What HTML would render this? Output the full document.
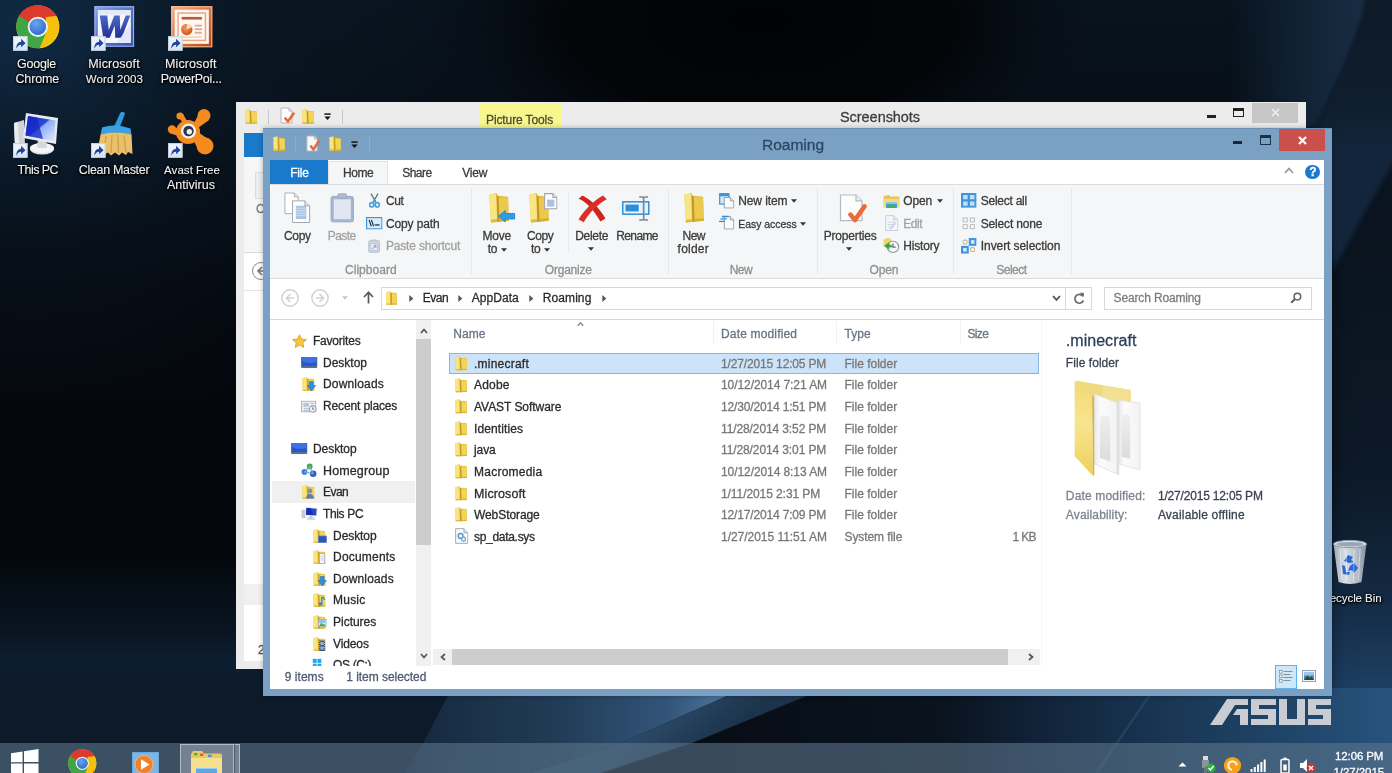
<!DOCTYPE html>
<html>
<head>
<meta charset="utf-8">
<title>Roaming</title>
<style>
*{box-sizing:border-box;margin:0;padding:0}
html,body{width:1392px;height:773px;overflow:hidden;background:#070c14}
body{filter:blur(0.55px);font-family:"Liberation Sans",sans-serif;font-size:12px;color:#1e1e1e;position:relative}
.abs{position:absolute}
svg{display:block;overflow:visible}
#wall{position:absolute;left:0;top:0;width:1392px;height:773px;overflow:hidden}
.t{position:absolute;white-space:nowrap;line-height:15px;font-size:12px;-webkit-text-stroke:0.28px currentColor}
.dl{color:#f2f2f2;-webkit-text-stroke:0.1px currentColor;margin-top:-0.2px;text-shadow:0 1px 2px #000,0 0 3px #000,1px 1px 2px rgba(0,0,0,.9)}
#asus{position:absolute;left:1210px;top:698.5px}
#task{position:absolute;left:0;top:743px;width:1392px;height:30px;background:rgba(92,116,139,.6);overflow:hidden}
#back{position:absolute;left:236px;top:101.6px;width:1069.6px;height:567.4px;background:#ececec;overflow:hidden}
#win{position:absolute;left:263px;top:128px;width:1069px;height:568px;background:#7aa0c3;overflow:hidden;box-shadow:0 0 5px rgba(0,0,0,.28)}
#inner{position:absolute;left:7px;top:32px;width:1054px;height:529px;background:#fff;overflow:hidden}

</style>
</head>
<body>
<div id="wall">
<svg class="abs" style="left:0;top:0" width="1392" height="773" viewBox="0 0 1392 773">
<defs>
<linearGradient id="wv" x1="0" y1="0" x2="0" y2="1">
 <stop offset="0" stop-color="#08131e"/><stop offset="0.16" stop-color="#070f18"/><stop offset="0.36" stop-color="#04070c"/>
 <stop offset="0.72" stop-color="#04080d"/><stop offset="0.84" stop-color="#0b1827"/><stop offset="0.9" stop-color="#0d1c2e"/><stop offset="1" stop-color="#0c1a2a"/>
</linearGradient>
<radialGradient id="wtl" cx="30" cy="20" r="420" gradientUnits="userSpaceOnUse">
 <stop offset="0" stop-color="#102b47"/><stop offset="0.25" stop-color="#0d2236" stop-opacity="0.8"/><stop offset="0.55" stop-color="#0a1826" stop-opacity="0.5"/><stop offset="1" stop-color="#0a1826" stop-opacity="0"/>
</radialGradient>
<radialGradient id="wtc" cx="760" cy="20" r="330" gradientUnits="userSpaceOnUse" gradientTransform="translate(760 20) scale(1 0.5) translate(-760 -20)">
 <stop offset="0" stop-color="#010203"/><stop offset="0.6" stop-color="#020406" stop-opacity="0.85"/><stop offset="1" stop-color="#05090f" stop-opacity="0"/>
</radialGradient>
<linearGradient id="wr" x1="0" y1="0" x2="0" y2="1">
 <stop offset="0" stop-color="#0c1825"/><stop offset="0.3" stop-color="#0a131e"/><stop offset="0.6" stop-color="#0c1927"/><stop offset="0.72" stop-color="#12263d"/><stop offset="0.88" stop-color="#1f456b"/><stop offset="1" stop-color="#245079"/>
</linearGradient>
<linearGradient id="wrh" x1="0" y1="0" x2="1" y2="0"><stop offset="0" stop-color="#000" stop-opacity="0.35"/><stop offset="0.3" stop-color="#000" stop-opacity="0"/></linearGradient>
<linearGradient id="wbB" x1="405" y1="0" x2="727" y2="0" gradientUnits="userSpaceOnUse">
 <stop offset="0" stop-color="#11223a"/><stop offset="0.12" stop-color="#182d44"/><stop offset="0.5" stop-color="#223d58"/><stop offset="0.82" stop-color="#33557a"/><stop offset="1" stop-color="#4d779d"/>
</linearGradient>
<linearGradient id="wbC" x1="621" y1="743" x2="660" y2="790" gradientUnits="userSpaceOnUse"><stop offset="0" stop-color="#2c4b69"/><stop offset="1" stop-color="#1c334b"/></linearGradient>
<linearGradient id="wbD" x1="690" y1="0" x2="1392" y2="0" gradientUnits="userSpaceOnUse">
 <stop offset="0" stop-color="#070d15"/><stop offset="0.36" stop-color="#0a131e"/><stop offset="0.5" stop-color="#11233a"/><stop offset="0.7" stop-color="#1a3856"/><stop offset="0.9" stop-color="#22496f"/><stop offset="1" stop-color="#27537d"/>
</linearGradient>
<linearGradient id="wbl" x1="0" y1="0" x2="0" y2="1"><stop offset="0" stop-color="#0e2238" stop-opacity="0"/><stop offset="0.5" stop-color="#112a45" stop-opacity="0.7"/><stop offset="1" stop-color="#0e2238" stop-opacity="0"/></linearGradient>
<filter id="bl" color-interpolation-filters="sRGB" filterUnits="userSpaceOnUse" x="-200" y="-200" width="1800" height="1200"><feGaussianBlur stdDeviation="14"/></filter>
<filter id="bl3" color-interpolation-filters="sRGB" filterUnits="userSpaceOnUse" x="-200" y="-200" width="1800" height="1200"><feGaussianBlur stdDeviation="2"/></filter>
<linearGradient id="wA" x1="1230" y1="0" x2="1350" y2="0" gradientUnits="userSpaceOnUse"><stop offset="0" stop-color="#16293d" stop-opacity="0"/><stop offset="0.6" stop-color="#14273b" stop-opacity="0.8"/><stop offset="1" stop-color="#172b40"/></linearGradient>
<linearGradient id="wC" x1="0" y1="0" x2="0" y2="200" gradientUnits="userSpaceOnUse"><stop offset="0" stop-color="#0d1a28"/><stop offset="0.5" stop-color="#0f1e2e"/><stop offset="0.75" stop-color="#13253a"/><stop offset="1" stop-color="#13253a"/></linearGradient>
<filter id="bl2" color-interpolation-filters="sRGB" filterUnits="userSpaceOnUse" x="-200" y="-200" width="1800" height="1200"><feGaussianBlur stdDeviation="6"/></filter>
</defs>
<rect width="1392" height="773" fill="url(#wv)"/>
<rect width="700" height="400" fill="url(#wtl)"/>
<rect x="400" width="720" height="200" fill="url(#wtc)"/>
<rect x="1322" y="-40" width="120" height="860" fill="url(#wr)" filter="url(#bl)"/>
<polygon points="1200,-20 1372,-20 1362,20 1345,65 1316,128 1200,128" fill="url(#wA)" filter="url(#bl3)"/>
<polygon points="1372,-20 1400,-20 1400,150 1333,270 1316,128 1345,65 1362,20" fill="url(#wC)" filter="url(#bl3)"/>
<rect x="0" y="636" width="300" height="48" fill="url(#wbl)" opacity="0.4"/>

<rect x="0" y="688" width="1392" height="85" fill="#0c1a2a"/>
<polygon points="640,688 1392,688 1392,773 560,773" fill="url(#wbD)"/>
<polygon points="452,688 745,688 621,743 531,773 405,773 423,743" fill="url(#wbB)"/>
<polygon points="745,688 826,688 692,743 601,773 531,773 621,743" fill="url(#wbC)"/>
<polygon points="1153,688 1156,688 1098,773 1095,773" fill="#3a6088" opacity="0.35"/>
</svg>
<svg width="0" height="0" style="position:absolute"><defs><radialGradient id="chg" cx="0.4" cy="0.3" r="0.8"><stop offset="0" stop-color="#6aa5ee"/><stop offset="1" stop-color="#2d66c4"/></radialGradient></defs></svg>
<svg class="abs" style="left:15.7px;top:4.7px" width="43.6" height="43.6" viewBox="-22 -22 44 44">
<circle r="21.7" fill="#f4c20d"/>
<path d="M0,0 L-18.8,-10.85 A21.7,21.7 0 0 1 18.8,-10.85 Z" fill="#db3a2c"/>
<path d="M-18.8,-10.85 A21.7,21.7 0 0 0 2,21.6 L10,4 L0,0 Z" fill="#3fa648"/>
<path d="M-18.8,-10.85 L-8.7,5 L0,0Z" fill="#3fa648"/>
<path d="M0,-10 L18.8,-10.85 A21.7,21.7 0 0 0 -18.8,-10.85 L-9,-5Z" fill="#db3a2c"/>
<path d="M18.8,-10.85 A21.7,21.7 0 0 1 2,21.6 L9,4 L8,-10Z" fill="#f4c20d"/>
<circle r="10.2" fill="#f1f1f1"/><circle r="8.2" fill="#3f7fd6"/><circle r="8.2" fill="url(#chg)"/>
</svg>
<svg class="abs" style="left:13px;top:35.5px" width="14.500" height="14.800" viewBox="0 0 15 15"><rect width="15" height="15" fill="#eef2f8"/><rect x="0.500" y="0.500" width="14" height="14" fill="none" stroke="#c3cfe0"/><path d="M0.500,10 L14.500,10 L14.500,14.500 L0.500,14.500Z" fill="#d4e0f2" opacity="0.8"/>
<path d="M3.600,13 C3.200,8 5.600,5.800 8.400,5.700 L8.400,2.800 L13,7.300 L8.400,11.600 L8.400,8.800 C6.200,8.800 4.600,10 3.600,13Z" fill="#1c469c"/></svg>
<span class="t dl" style="left:36.5px;width:0;display:flex;justify-content:center;top:55.8px;font-size:12.5px;line-height:16px;letter-spacing:-0.22px"><span style="white-space:nowrap">Google</span></span>
<span class="t dl" style="left:37.3px;width:0;display:flex;justify-content:center;top:70.8px;font-size:12.5px;line-height:16px;letter-spacing:-0.13px"><span style="white-space:nowrap">Chrome</span></span>
<svg class="abs" style="left:94px;top:6px" width="40.500" height="41" viewBox="0 0 40 41">
<defs><linearGradient id="wdf" x1="0" y1="0" x2="1" y2="1"><stop offset="0" stop-color="#86a2e6"/><stop offset="0.5" stop-color="#5673c9"/><stop offset="1" stop-color="#3550b0"/></linearGradient>
<linearGradient id="wdw" x1="0" y1="0" x2="0" y2="1"><stop offset="0" stop-color="#4f69c8"/><stop offset="1" stop-color="#1f2f96"/></linearGradient></defs>
<rect width="40" height="41" fill="url(#wdf)"/><rect x="0.800" y="0.800" width="38.400" height="39.400" fill="none" stroke="#9db3ec" stroke-width="1"/>
<rect x="3.600" y="4" width="33" height="33" fill="#f4f6fc"/><rect x="3.600" y="4" width="33" height="4.500" fill="#e3e9f8"/>
<path d="M5.500,9.500 L13,9.500 L14.500,24 L20,9.500 L25.500,9.500 L26,24 L31.500,9.500 L36,9.500 L27.500,31.800 L21,31.800 L20.500,19.500 L15.500,31.800 L9,31.800Z" fill="url(#wdw)"/>
<path d="M22,37 L36.600,18 L36.600,37Z" fill="#dfe5f6" opacity="0.8"/></svg>
<svg class="abs" style="left:90.5px;top:35.5px" width="14.500" height="14.800" viewBox="0 0 15 15"><rect width="15" height="15" fill="#eef2f8"/><rect x="0.500" y="0.500" width="14" height="14" fill="none" stroke="#c3cfe0"/><path d="M0.500,10 L14.500,10 L14.500,14.500 L0.500,14.500Z" fill="#d4e0f2" opacity="0.8"/>
<path d="M3.600,13 C3.200,8 5.600,5.800 8.400,5.700 L8.400,2.800 L13,7.300 L8.400,11.600 L8.400,8.800 C6.200,8.800 4.600,10 3.600,13Z" fill="#1c469c"/></svg>
<span class="t dl" style="left:114.0px;width:0;display:flex;justify-content:center;top:55.8px;font-size:12.5px;line-height:16px;letter-spacing:0.08px"><span style="white-space:nowrap">Microsoft</span></span>
<span class="t dl" style="left:114.4px;width:0;display:flex;justify-content:center;top:70.8px;font-size:11.5px;line-height:16px;letter-spacing:0.13px"><span style="white-space:nowrap">Word 2003</span></span>
<svg class="abs" style="left:171px;top:6px" width="41.500" height="41.500" viewBox="0 0 41 41">
<defs><linearGradient id="ppf" x1="0" y1="0" x2="1" y2="1"><stop offset="0" stop-color="#f0b48a"/><stop offset="0.45" stop-color="#db7c4c"/><stop offset="1" stop-color="#b04a1c"/></linearGradient>
<radialGradient id="ppc" cx="0.4" cy="0.35" r="0.7"><stop offset="0" stop-color="#f59a5c"/><stop offset="1" stop-color="#cf4f16"/></radialGradient></defs>
<rect width="41" height="41" fill="url(#ppf)"/><rect x="0.800" y="0.800" width="39.400" height="39.400" fill="none" stroke="#f5c4a4" stroke-width="1" opacity="0.8"/>
<rect x="3.600" y="3.600" width="33.800" height="33.800" fill="#fdf3ec"/><rect x="7" y="7" width="27" height="27" fill="#fff8f3" stroke="#eaa57f" stroke-width="1.400"/>
<rect x="10.500" y="10.800" width="20" height="2.600" fill="#bd5a36"/>
<circle cx="15.600" cy="23.200" r="5.600" fill="url(#ppc)"/><path d="M15.600,23.200 L15.600,17.600 A5.600,5.600 0 0 1 20.800,21Z" fill="#fbd9c3"/>
<g fill="#e7a888"><rect x="23.500" y="18.500" width="7" height="1.800"/><rect x="23.500" y="22" width="7" height="1.800"/><rect x="23.500" y="25.500" width="7" height="1.800"/></g>
<rect x="10.500" y="30" width="20" height="1.400" fill="#f2cdb6"/></svg>
<svg class="abs" style="left:168px;top:35.5px" width="14.500" height="14.800" viewBox="0 0 15 15"><rect width="15" height="15" fill="#eef2f8"/><rect x="0.500" y="0.500" width="14" height="14" fill="none" stroke="#c3cfe0"/><path d="M0.500,10 L14.500,10 L14.500,14.500 L0.500,14.500Z" fill="#d4e0f2" opacity="0.8"/>
<path d="M3.600,13 C3.200,8 5.600,5.800 8.400,5.700 L8.400,2.800 L13,7.300 L8.400,11.600 L8.400,8.800 C6.200,8.800 4.600,10 3.600,13Z" fill="#1c469c"/></svg>
<span class="t dl" style="left:190.8px;width:0;display:flex;justify-content:center;top:55.8px;font-size:12.5px;line-height:16px;letter-spacing:0.08px"><span style="white-space:nowrap">Microsoft</span></span>
<span class="t dl" style="left:191.2px;width:0;display:flex;justify-content:center;top:70.8px;font-size:12.5px;line-height:16px;letter-spacing:-0.27px"><span style="white-space:nowrap">PowerPoi...</span></span>
<svg class="abs" style="left:12px;top:111px" width="48" height="46" viewBox="0 0 48 46">
<defs><linearGradient id="pcs" x1="0" y1="0" x2="1" y2="1"><stop offset="0" stop-color="#1a2fd0"/><stop offset="0.45" stop-color="#2a49d8"/><stop offset="0.5" stop-color="#8fb0f4"/><stop offset="1" stop-color="#dfeaff"/></linearGradient></defs>
<path d="M2,12 L12,9 L13,34 L3,36Z" fill="#cfd3d8"/><path d="M2,12 L6,11 L7,35 L3,36Z" fill="#e9ebee"/>
<ellipse cx="30" cy="38" rx="12" ry="5.5" fill="#dfe2e6"/><ellipse cx="30" cy="37" rx="12" ry="5" fill="#f4f5f7"/><path d="M26,28 L34,29 L35,37 L25,37Z" fill="#d5d8dc"/>
<path d="M14,2 L46,7 L44,33 L11,27Z" fill="#e7eaee"/><path d="M16,5 L43.5,9.5 L42,30 L13.5,24.5Z" fill="url(#pcs)"/>
<path d="M16,5 L25,6.5 L31,28 L13.5,24.5Z" fill="#1626c4" opacity="0.75"/>
</svg>
<svg class="abs" style="left:13px;top:142.5px" width="14.500" height="14.800" viewBox="0 0 15 15"><rect width="15" height="15" fill="#eef2f8"/><rect x="0.500" y="0.500" width="14" height="14" fill="none" stroke="#c3cfe0"/><path d="M0.500,10 L14.500,10 L14.500,14.500 L0.500,14.500Z" fill="#d4e0f2" opacity="0.8"/>
<path d="M3.600,13 C3.200,8 5.600,5.800 8.400,5.700 L8.400,2.800 L13,7.300 L8.400,11.600 L8.400,8.800 C6.200,8.800 4.600,10 3.600,13Z" fill="#1c469c"/></svg>
<span class="t dl" style="left:37.7px;width:0;display:flex;justify-content:center;top:161.8px;font-size:12.5px;line-height:16px;letter-spacing:-0.60px"><span style="white-space:nowrap">This PC</span></span>
<svg class="abs" style="left:93px;top:110px" width="42" height="46" viewBox="0 0 42 46">
<path d="M27.5,2.5 Q30.5,0.5 32,3.5 L26.5,18 L21,16.5Z" fill="#2f9ce0"/>
<path d="M9,17.5 Q22,13 37.5,18.5 L38.5,25 Q22,20.5 7.5,25Z" fill="#3aa2e2"/>
<path d="M7.5,24.5 Q22,20.5 38.5,24.5 L39.5,44 L35,42 L33,45 L29,42.5 L26,45.5 L22,42.5 L18,45.5 L15,42.5 L10,45 L8,42 L2,45 Q6,36 7.5,24.5Z" fill="#eac06a"/>
<path d="M13,26 L11,42 M19,25 L18,43 M25,25 L25.5,43 M31,25.5 L33,42.5" stroke="#cfa04a" stroke-width="1.3" fill="none"/>
</svg>
<svg class="abs" style="left:90.5px;top:142.5px" width="14.500" height="14.800" viewBox="0 0 15 15"><rect width="15" height="15" fill="#eef2f8"/><rect x="0.500" y="0.500" width="14" height="14" fill="none" stroke="#c3cfe0"/><path d="M0.500,10 L14.500,10 L14.500,14.500 L0.500,14.500Z" fill="#d4e0f2" opacity="0.8"/>
<path d="M3.600,13 C3.200,8 5.600,5.800 8.400,5.700 L8.400,2.800 L13,7.300 L8.400,11.600 L8.400,8.800 C6.200,8.800 4.600,10 3.600,13Z" fill="#1c469c"/></svg>
<span class="t dl" style="left:114.0px;width:0;display:flex;justify-content:center;top:161.8px;font-size:12.5px;line-height:16px;letter-spacing:-0.32px"><span style="white-space:nowrap">Clean Master</span></span>
<svg class="abs" style="left:166px;top:107.5px" width="49" height="50" viewBox="0 0 49 50">
<g fill="#f58a1f"><circle cx="22" cy="24" r="12"/><circle cx="38" cy="7.5" r="6.5"/><circle cx="14" cy="8" r="3.6"/><circle cx="6" cy="21.5" r="4.2"/><circle cx="39" cy="38" r="8.5"/>
<path d="M28,15 L34,4 L43,12 L32,20Z"/><path d="M16,14 L12,7 L17,6 L21,13Z"/><path d="M11,20 L4,18 L5,25.5 L12,28Z"/><path d="M27,32 L34,44 L45,33 L32,24Z"/></g>
<circle cx="22.5" cy="23" r="7.6" fill="#f3f3f3"/><circle cx="22.5" cy="23" r="5.2" fill="#2c3644"/><circle cx="23.3" cy="23.8" r="2.7" fill="#f3f3f3"/><rect x="23" y="23" width="6" height="6" fill="#f3f3f3" opacity="0.0"/>
</svg>
<svg class="abs" style="left:168px;top:142.5px" width="14.500" height="14.800" viewBox="0 0 15 15"><rect width="15" height="15" fill="#eef2f8"/><rect x="0.500" y="0.500" width="14" height="14" fill="none" stroke="#c3cfe0"/><path d="M0.500,10 L14.500,10 L14.500,14.500 L0.500,14.500Z" fill="#d4e0f2" opacity="0.8"/>
<path d="M3.600,13 C3.200,8 5.600,5.800 8.400,5.700 L8.400,2.800 L13,7.300 L8.400,11.600 L8.400,8.800 C6.200,8.800 4.600,10 3.600,13Z" fill="#1c469c"/></svg>
<span class="t dl" style="left:192.0px;width:0;display:flex;justify-content:center;top:161.8px;font-size:11.5px;line-height:16px;letter-spacing:0.04px"><span style="white-space:nowrap">Avast Free</span></span>
<span class="t dl" style="left:191.0px;width:0;display:flex;justify-content:center;top:177.3px;font-size:12.5px;line-height:16px"><span style="white-space:nowrap">Antivirus</span></span>
<svg class="abs" style="left:1332px;top:539px" width="36" height="46" viewBox="0 0 36 46">
<defs><linearGradient id="rb" x1="0" y1="0" x2="1" y2="0"><stop offset="0" stop-color="#aeb9c6"/><stop offset="0.35" stop-color="#e8edf2"/><stop offset="0.7" stop-color="#c3ccd6"/><stop offset="1" stop-color="#8e9aa8"/></linearGradient></defs>
<path d="M1.5,5 L34.5,5 L29.5,43 Q18,47 6.5,43Z" fill="url(#rb)" opacity="0.92"/>
<ellipse cx="18" cy="5" rx="16.5" ry="3.6" fill="#dfe5ec" stroke="#8f9baa" stroke-width="1"/>
<ellipse cx="18" cy="5.2" rx="13.5" ry="2.3" fill="#9aa6b5"/>
<path d="M12,22 l4,-6 l5,2 l-2,3 l3,2 l-5,1Z M22,24 l4,5 l-4,5 l-2,-3 l-4,1 l2,-5Z M10,26 l3,1 l1,6 l4,0 l-1,3 l-6,-1Z" fill="#2a66d8"/>
<path d="M8,10 L10,41 M14,11 L15,43 M22,11 L21.5,43 M28,10 L26.5,41" stroke="#fff" stroke-opacity="0.45" stroke-width="1"/>
</svg>
<span class="t dl" style="left:1351.5px;width:0;display:flex;justify-content:center;top:590.3px;font-size:11.5px;line-height:16px;letter-spacing:-0.07px"><span style="white-space:nowrap">Recycle Bin</span></span>
</div>
<div id="asus"><svg width="121" height="27" viewBox="0 0 121 27"><g fill="#c9cdd3"><path d="M0,26 L17,0 L38,0 L38,6 L25,6 L12,26Z"/><path d="M26,11 L26,26 L34,26 L34,11Z" transform="skewX(-8) translate(3,0)" opacity="0"/><path d="M22,20 L38,20 L38,26 L18,26Z" opacity="0"/><path d="M27,10 L38,10 L38,26 L30,26 L30,16 L23,16Z"/><path d="M41,0 L66,0 L66,6 L49,6 L49,10 L66,10 L66,26 L41,26 L41,20 L58,20 L58,16 L41,16Z"/><path d="M69,0 L77,0 L77,20 L87,20 L87,0 L95,0 L95,26 L69,26Z"/><path d="M98,0 L121,0 L121,6 L106,6 L106,10 L121,10 L121,26 L98,26 L98,20 L113,20 L113,16 L98,16Z"/></g></svg></div>
<div id="task">
<div class="abs" style="left:180px;top:1px;width:54px;height:29px;background:rgba(150,160,172,.62);border:1px solid rgba(200,208,216,.75);border-bottom:none"></div>
<div class="abs" style="left:234px;top:1px;width:5.5px;height:29px;background:rgba(150,160,172,.62);border:1px solid rgba(200,208,216,.75);border-bottom:none;border-left:1px solid rgba(70,84,100,.9)"></div>
<svg class="abs" style="left:11px;top:6px" width="28" height="24" viewBox="0 0 28 24"><g fill="#fff"><path d="M0,4.2 L11.6,2.5 L11.6,13.2 L0,13.3Z"/><path d="M13,2.3 L27.5,0 L27.5,13 L13,13.1Z"/><path d="M0,14.6 L11.6,14.6 L11.6,25.5 L0,23.8Z"/><path d="M13,14.6 L27.5,14.6 L27.5,28 L13,25.8Z"/></g></svg>
<svg class="abs" style="left:68.2px;top:5.7px" width="28.6" height="28.6" viewBox="-22 -22 44 44">
<circle r="21.7" fill="#f4c20d"/>
<path d="M0,0 L-18.8,-10.85 A21.7,21.7 0 0 1 18.8,-10.85 Z" fill="#db3a2c"/>
<path d="M-18.8,-10.85 A21.7,21.7 0 0 0 2,21.6 L10,4 L0,0 Z" fill="#3fa648"/>
<path d="M-18.8,-10.85 L-8.7,5 L0,0Z" fill="#3fa648"/>
<path d="M0,-10 L18.8,-10.85 A21.7,21.7 0 0 0 -18.8,-10.85 L-9,-5Z" fill="#db3a2c"/>
<path d="M18.8,-10.85 A21.7,21.7 0 0 1 2,21.6 L9,4 L8,-10Z" fill="#f4c20d"/>
<circle r="10.2" fill="#f1f1f1"/><circle r="8.2" fill="#3f7fd6"/><circle r="8.2" fill="url(#chg)"/>
</svg>
<svg class="abs" style="left:131.5px;top:9px" width="27" height="21" viewBox="0 0 27 21"><rect width="27" height="21" fill="#6aa6d8"/><rect x="1" y="1" width="25" height="20" fill="#7db6e4"/><circle cx="12" cy="12.5" r="9" fill="#f0812a"/><circle cx="12" cy="12.5" r="9" fill="none" stroke="#f9b377" stroke-width="1"/><path d="M9,7.3 L17.5,12.5 L9,17.7Z" fill="#fff"/></svg>
<svg class="abs" style="left:190px;top:7px" width="33" height="23" viewBox="0 0 33 23"><path d="M1,4 L3,1 L12,1 L14,3.5 L31,3.5 L32,5 L32,23 L1,23Z" fill="#e8c964"/><rect x="4" y="3" width="3.4" height="2.4" fill="#4bb04a"/><rect x="10" y="3.6" width="3.4" height="2.4" fill="#e05a3a"/><rect x="18" y="4.6" width="3.6" height="2.4" fill="#4a8fe0"/><path d="M1,8 L32,8 L32,23 L1,23Z" fill="#f6df8e"/><rect x="6" y="17" width="21" height="6" fill="#5aa8e6"/><rect x="6" y="17" width="21" height="1.6" fill="#c6e2f7"/></svg>
<svg class="abs" style="left:1176px;top:12px" width="160" height="18" viewBox="0 0 160 18"><path d="M2.5,11.5 L6.5,7.5 L10.5,11.5Z" fill="#fff"/><rect x="27" y="1" width="5" height="4" fill="#d8dde2"/><rect x="26" y="5" width="7" height="8" fill="#8a949e"/><rect x="28" y="12" width="3" height="6" fill="#6d7680"/><circle cx="35" cy="13" r="4.6" fill="#2fae3a"/><path d="M32.6,13 L34.4,15 L37.6,11" stroke="#fff" stroke-width="1.4" fill="none"/><circle cx="56.5" cy="10.5" r="8.6" fill="#f7a11a"/><circle cx="56.5" cy="10.5" r="4.2" fill="none" stroke="#fdf0d8" stroke-width="2.2"/><rect x="56" y="10.5" width="6" height="6" fill="#f7a11a"/><g fill="#fff"><rect x="74.5" y="14" width="2" height="3"/><rect x="77.8" y="12" width="2" height="5"/><rect x="81.1" y="9.5" width="2" height="7.5"/><rect x="84.4" y="7" width="2" height="10"/><rect x="87.7" y="4.5" width="2" height="12.5"/></g><rect x="105" y="4.5" width="8" height="13.5" rx="1.2" fill="none" stroke="#fff" stroke-width="1.5"/><rect x="107.5" y="2.6" width="3" height="2" fill="#fff"/><rect x="107.3" y="9.5" width="3.4" height="6" fill="#fff"/><path d="M124,8 L127,8 L131,4 L131,17 L127,13 L124,13Z" fill="#fff"/><circle cx="135" cy="13" r="4.4" fill="#d9332e"/><path d="M133,11 L137,15 M137,11 L133,15" stroke="#fff" stroke-width="1.3"/></svg>
<span class="t" style="left:1335.0px;top:5.3px;font-size:11.5px;line-height:16px;letter-spacing:-0.12px;color:#fff">12:06 PM</span>
<span class="t" style="left:1333.5px;top:21.3px;font-size:11.5px;line-height:16px;letter-spacing:-0.07px;color:#fff">1/27/2015</span>
</div>
<div id="back"><div class="abs" style="left:-236px;top:-102px">
<svg class="abs" style="left:244px;top:108px;" width="14.5" height="17"><use href="#fold16" width="14.5" height="17"/></svg>
<div class="abs" style="left:267.5px;top:110px;width:1px;height:14px;background:#c6c6c6;"></div>
<svg class="abs" style="left:278.5px;top:107.5px;" width="16" height="18"><use href="#doccheck" width="16" height="18"/></svg>
<svg class="abs" style="left:301px;top:108px;" width="14.5" height="17"><use href="#fold16" width="14.5" height="17"/></svg>
<svg class="abs" style="left:322.5px;top:112.5px;" width="9" height="9"><use href="#qadrop" width="9" height="9"/></svg>
<div class="abs" style="left:341.5px;top:110px;width:1px;height:14px;background:#c6c6c6;"></div>
<div class="abs" style="left:479px;top:104px;width:82px;height:24px;background:#f8f68e;"></div>
<span class="t" style="left:486.0px;top:113.3px;letter-spacing:-0.11px;color:#4a4a30">Picture Tools</span>
<span class="t" style="left:840.0px;top:108.8px;font-size:14.5px;line-height:19px;letter-spacing:-0.05px;color:#3c3c3c">Screenshots</span>
<div class="abs" style="left:1207px;top:115.5px;width:8.5px;height:2.6px;background:#222;"></div>
<div class="abs" style="left:1233px;top:108px;width:10.5px;height:9.5px;border:1.4px solid #222;border-top-width:3px"></div>
<div class="abs" style="left:1252px;top:103px;width:46px;height:20px;background:#c6c6c6;"></div>
<svg class="abs" style="left:1270.5px;top:108.5px" width="9" height="9" viewBox="0 0 9 9"><path d="M1,1 L8,8 M8,1 L1,8" stroke="#efefef" stroke-width="1.700"/></svg>
<div class="abs" style="left:244px;top:128px;width:20px;height:541px;background:#fff;"></div>
<div class="abs" style="left:244px;top:128px;width:20px;height:6px;background:#ececec;"></div>
<div class="abs" style="left:244px;top:133.5px;width:20px;height:23.5px;background:#1979ca;"></div>
<div class="abs" style="left:244px;top:157px;width:20px;height:96px;background:#f5f6f7;"></div>
<div class="abs" style="left:244px;top:252px;width:20px;height:1px;background:#dadbdc;"></div>
<div class="abs" style="left:255px;top:172px;width:9px;height:27px;background:#eceef2;border:1px solid #d9dde3"></div>
<span class="t" style="left:256.0px;top:202.3px;color:#7a7a7a">C</span>
<div class="abs" style="left:251.5px;top:262px;width:18px;height:18px;border:1.6px solid #8c8c8c;border-radius:50%"></div>
<svg class="abs" style="left:255.5px;top:266px" width="10" height="10" viewBox="0 0 10 10"><path d="M6,1 L2,5 L6,9 M2,5 L10,5" stroke="#777" stroke-width="1.600" fill="none"/></svg>
<div class="abs" style="left:244px;top:290px;width:20px;height:1px;background:#e4e4e4;"></div>
<div class="abs" style="left:244px;top:584px;width:20px;height:21px;background:#f0f0f0;"></div>
<span class="t" style="left:258.0px;top:643.3px;color:#555">2</span>
<div class="abs" style="left:244px;top:661px;width:20px;height:8px;background:#ececec;"></div>
</div></div>
<svg width="0" height="0" style="position:absolute"><defs>
<symbol id="fold16" viewBox="0 0 16 16" preserveAspectRatio="none"><path d="M1.5,2.2 L6,1.2 L7,2.6 L14,3 L14.3,14.6 L1.8,14.8Z" fill="#e6c03c"/><path d="M1.5,2.2 L5.6,1.3 L6.4,14.9 L1.8,14.8Z" fill="#f8e57e"/><path d="M7.6,3.4 L13.8,3.6 L14,14.3 L8.2,14.6Z" fill="#f1d458"/><path d="M6.6,3 L7.9,3 L8.4,14.7 L6.8,14.8Z" fill="#c49a26"/><path d="M2,13.500 L14.200,13.300 L14.300,14.600 L1.800,14.800Z" fill="#d2a930" opacity="0.7"/></symbol>
<symbol id="fold32" viewBox="0 0 32 34" preserveAspectRatio="none"><path d="M3,3 L12,1 L14,4 L27,5 L28,30 L5,32Z" fill="#e3bb3c"/><path d="M3,3 L11.5,1.2 L13,31.3 L5,32Z" fill="#f8e684"/><path d="M15,5.4 L27,6 L27.6,29.6 L16,30.8Z" fill="#ebc94e"/><path d="M12.6,4 L15,4.6 L16,31 L13,31.4Z" fill="#c39927"/><path d="M5,29 L27.800,27.500 L28,30 L5,32Z" fill="#cfa52e" opacity="0.7"/></symbol>
<symbol id="doc" viewBox="0 0 16 16" preserveAspectRatio="none"><path d="M3,1 L10,1 L13,4 L13,15 L3,15Z" fill="#fff" stroke="#9aa3ae" stroke-width="1"/><path d="M10,1 L10,4 L13,4" fill="#e6e9ee" stroke="#9aa3ae" stroke-width="1"/></symbol>
<symbol id="doccheck" viewBox="0 0 16 18" preserveAspectRatio="none"><path d="M2,1 L10,1 L13,4 L13,16 L2,16Z" fill="#fdfdfd" stroke="#b3b7bd" stroke-width="1"/><path d="M10,1 L10,4 L13,4" fill="#e9ebee" stroke="#b3b7bd" stroke-width="1"/><path d="M6.5,11.5 L9,14.5 L14.5,6.5" fill="none" stroke="#e8683a" stroke-width="2.6" stroke-linecap="round" stroke-linejoin="round"/></symbol>
<symbol id="qadrop" viewBox="0 0 10 10" preserveAspectRatio="none"><rect x="1.5" y="1.5" width="7" height="1.6" fill="#111"/><path d="M1.5,5 L8.5,5 L5,8.8Z" fill="#111"/></symbol>
<symbol id="copy32" viewBox="0 0 30 32" preserveAspectRatio="none"><path d="M1,1 L11,1 L15,5 L15,22 L1,22Z" fill="#fff" stroke="#a9adb3"/><path d="M11,1 L11,5 L15,5" fill="#e4e6ea" stroke="#a9adb3"/>
<path d="M9,9 L22,9 L27,14 L27,31 L9,31Z" fill="#fdfdfd" stroke="#9fa4ab"/><path d="M22,9 L22,14 L27,14" fill="#e1e4e8" stroke="#9fa4ab"/>
<rect x="12.5" y="14" width="11" height="13.5" fill="#a9c3e6"/><path d="M12.5,16.5h11M12.5,19h11M12.5,21.500h11M12.5,24h11" stroke="#dbe7f6" stroke-width="0.8"/></symbol>
<symbol id="paste32" viewBox="0 0 26 31" preserveAspectRatio="none"><rect x="1.2" y="3.5" width="23.6" height="26.3" rx="2" fill="#9fb0cd" stroke="#8a9bbb"/><rect x="4" y="6.5" width="18" height="20.5" fill="#dfe5f1"/><rect x="8.5" y="0.8" width="9" height="4.6" rx="1" fill="#a9b6cc" stroke="#8a9bbb" stroke-width="0.8"/></symbol>
<symbol id="cut" viewBox="0 0 12 16" preserveAspectRatio="none"><path d="M2.2,0.6 L7.3,9.2 M9.8,0.6 L4.7,9.2" stroke="#6c7787" stroke-width="1.5" fill="none"/><circle cx="3" cy="12.2" r="2.3" fill="none" stroke="#3ea0dd" stroke-width="1.7"/><circle cx="9" cy="12.2" r="2.3" fill="none" stroke="#3ea0dd" stroke-width="1.7"/><path d="M4.4,10.2 L6,7.6 L7.6,10.2" stroke="#3ea0dd" stroke-width="1.5" fill="none"/></symbol>
<symbol id="copypath" viewBox="0 0 17 13" preserveAspectRatio="none"><rect x="0.6" y="0.6" width="15.8" height="11.8" fill="#d8ecfb" stroke="#3c93d6" stroke-width="1.2"/><path d="M3.2,3 L5.4,9.6 M5.6,3 L7.8,9.6" stroke="#1d2b3c" stroke-width="1.2"/><rect x="9" y="7.6" width="5" height="1.3" fill="#1d2b3c"/></symbol>
<symbol id="pastesc" viewBox="0 0 13 15" preserveAspectRatio="none"><rect x="0.8" y="1.8" width="11.4" height="12.4" rx="1" fill="#c9d1de" stroke="#a6b0c2"/><rect x="4" y="0.5" width="5" height="2.4" fill="#b4bdcc"/><rect x="3" y="5" width="7" height="7" fill="#eef1f6" stroke="#9fb0cb" stroke-width="0.8"/><path d="M4.6,10.6 L8.2,7 M5.6,6.8 L8.4,6.8 L8.4,9.6" stroke="#7f94b8" stroke-width="1.1" fill="none"/></symbol>
<symbol id="bluearrow" viewBox="0 0 18 13" preserveAspectRatio="none"><path d="M0.5,6.5 L7.5,0.5 L7.5,3.6 L17.3,3.6 L17.3,9.4 L7.5,9.4 L7.5,12.5Z" fill="#2d9be6" stroke="#1b7fc9" stroke-width="0.8"/></symbol>
<symbol id="minidoc" viewBox="0 0 13 16" preserveAspectRatio="none"><path d="M0.6,0.6 L8.5,0.6 L12.4,4.4 L12.4,15.4 L0.6,15.4Z" fill="#fdfdfd" stroke="#9fa4ab"/><path d="M8.5,0.6 L8.5,4.4 L12.4,4.4" fill="#e1e4e8" stroke="#9fa4ab"/><rect x="3" y="6.4" width="7" height="6.8" fill="#a9c3e6"/></symbol>
<symbol id="delx" viewBox="0 0 30 28" preserveAspectRatio="none"><path d="M1.500,3.800 C8,5.500 17,15.500 23.500,27 L28.500,24 C22,12.500 13.500,4.500 5.500,0.500Z" fill="#cf251d"/><path d="M26,0.500 C17,5.500 7,15.500 1.500,25 L6.800,27.800 C11.500,18.500 20.500,9.500 29.800,4.200Z" fill="#dc3027"/></symbol>
<symbol id="rename" viewBox="0 0 31 25" preserveAspectRatio="none"><rect x="0.8" y="5.8" width="26.4" height="12.4" fill="#e6f2fc" stroke="#2f8fd6" stroke-width="1.5"/><rect x="3.6" y="8.6" width="13.4" height="6.8" fill="#2f8fd6"/><path d="M17.5,1 L20.5,1 Q22,1 22,2.6 L22,22.4 Q22,24 20.5,24 L17.5,24 M26.500,1 L23.5,1 Q22,1 22,2.6 M26.500,24 L23.5,24 Q22,24 22,22.4" fill="none" stroke="#7c8794" stroke-width="1.7"/></symbol>
<symbol id="newitem" viewBox="0 0 16 16" preserveAspectRatio="none"><rect x="0.7" y="0.7" width="9.600" height="10.6" fill="#cfe6f8" stroke="#3c93d6" stroke-width="1.2"/><rect x="0.7" y="0.7" width="9.600" height="2.6" fill="#3c93d6"/><path d="M5.5,4.600 L11.6,4.600 L15.2,8 L15.2,15.3 L5.5,15.3Z" fill="#fbfbfc" stroke="#99a0a9"/><path d="M11.6,4.600 L11.6,8 L15.2,8" fill="#e3e6ea" stroke="#99a0a9"/></symbol>
<symbol id="easy" viewBox="0 0 16 16" preserveAspectRatio="none"><path d="M5.5,2.600 L11.6,2.600 L15.2,6 L15.2,15.3 L5.5,15.3Z" fill="#fbfbfc" stroke="#99a0a9"/><path d="M11.6,2.600 L11.6,6 L15.2,6" fill="#e3e6ea" stroke="#99a0a9"/><path d="M3,2.500h7M1.500,5h6.500M0,7.500h6" stroke="#2f8fd6" stroke-width="1.4"/></symbol>
<symbol id="props" viewBox="0 0 28 30" preserveAspectRatio="none"><path d="M1.5,1 L17,1 L23,7 L23,27 L1.5,27Z" fill="#fdfdfd" stroke="#b6babf" stroke-width="1.2"/><path d="M17,1 L17,7 L23,7" fill="#eceef0" stroke="#b6babf" stroke-width="1.2"/><path d="M11.500,21 L16,26.500 L25.500,12.500" fill="none" stroke="#ea6a3c" stroke-width="4.600" stroke-linecap="round" stroke-linejoin="round"/></symbol>
<symbol id="open" viewBox="0 0 17 15" preserveAspectRatio="none"><path d="M0.6,2 L6,1 L7.5,2.600 L16.4,2.600 L16.4,13.6 L0.6,13.6Z" fill="#e7c456"/><path d="M0.6,5 L16.4,5 L16.4,13.6 L0.6,13.6Z" fill="#f3db7e"/><path d="M3,8.6 L14,8.6 L14,14.5 L3,14.5Z" fill="#3fa0e0"/><path d="M3,8.6 L14,8.6 L14,10 L3,10Z" fill="#9ad0f3"/><path d="M5,12 q3.500,-2.500 7,0.5 L12,14.5 L5,14.5Z" fill="#4bae4f"/></symbol>
<symbol id="edit" viewBox="0 0 14 17" preserveAspectRatio="none"><path d="M0.7,0.7 L9,0.7 L13.3,5 L13.3,16.3 L0.7,16.3Z" fill="#f4f6fa" stroke="#bcc5d6"/><path d="M9,0.7 L9,5 L13.3,5" fill="#dfe5f0" stroke="#bcc5d6"/><path d="M3,7.500h8M3,10h8M3,12.500h6" stroke="#c6d0e2" stroke-width="1"/><path d="M10.500,8 L5.500,15" stroke="#b9c6de" stroke-width="1.6"/></symbol>
<symbol id="history" viewBox="0 0 17 17" preserveAspectRatio="none"><path d="M0.6,3 L5,0.6 L9,3 L9,8 L0.6,10Z" fill="#f1d46e"/><circle cx="10.200" cy="10.400" r="5.900" fill="#f4f5f7" stroke="#8d97a3" stroke-width="1.2"/><path d="M10.200,6.800 L10.200,10.600 L13,10.600" stroke="#5d6876" stroke-width="1.2" fill="none"/><path d="M1,9.500 L6.500,5.500 L6.500,8 Q9.500,8 9.500,11 Q8.500,10.500 6.500,10.800 L6.500,13.200Z" fill="#37a83c"/></symbol>
<symbol id="selall" viewBox="0 0 16 16" preserveAspectRatio="none"><rect width="16" height="16" fill="#3f96dc"/><g fill="#bfe0f8"><rect x="2.200" y="2.200" width="4.600" height="4.600"/><rect x="9.200" y="2.200" width="4.600" height="4.600"/><rect x="2.200" y="9.200" width="4.600" height="4.600"/><rect x="9.200" y="9.200" width="4.600" height="4.600"/></g></symbol>
<symbol id="selnone" viewBox="0 0 16 16" preserveAspectRatio="none"><g fill="#fafbfc" stroke="#b9bdc3" stroke-width="1.1"><rect x="2.200" y="2.200" width="4.200" height="4.200"/><rect x="9.600" y="2.200" width="4.200" height="4.200"/><rect x="2.200" y="9.600" width="4.200" height="4.200"/><rect x="9.600" y="9.600" width="4.200" height="4.200"/></g></symbol>
<symbol id="selinv" viewBox="0 0 16 16" preserveAspectRatio="none"><rect x="8" y="0" width="8" height="8" fill="#3f96dc"/><rect x="10.200" y="2.200" width="3.600" height="3.600" fill="#d6ebfa"/><rect x="0" y="8" width="8" height="8" fill="#3f96dc"/><rect x="2.200" y="10.200" width="3.600" height="3.600" fill="#d6ebfa"/><rect x="2.200" y="2.200" width="4" height="4" rx="1" fill="#f6f6f6" stroke="#c0b9a8" stroke-width="1.1"/><rect x="9.800" y="9.800" width="4" height="4" rx="1" fill="#f6f6f6" stroke="#c0b9a8" stroke-width="1.1"/></symbol>
<symbol id="star" viewBox="0 0 16 16" preserveAspectRatio="none"><path d="M8,0.8 L10.200,5.600 L15.400,6.200 L11.500,9.700 L12.600,14.900 L8,12.200 L3.400,14.900 L4.500,9.700 L0.6,6.200 L5.800,5.600Z" fill="#f6c544" stroke="#e39a22" stroke-width="0.9"/></symbol>
<symbol id="desk16" viewBox="0 0 17 14" preserveAspectRatio="none"><rect x="0.500" y="0.500" width="16" height="11.500" fill="#2a56c6" stroke="#4d6fb8"/><path d="M1,1 L16,1 L16,6 Q8,9 1,5Z" fill="#3f6fe0"/><rect x="0.500" y="11" width="16" height="2.500" fill="#5a6f94"/></symbol>
<symbol id="sysfile" viewBox="0 0 14 16" preserveAspectRatio="none"><path d="M0.7,0.7 L9.300,0.7 L13.300,4.700 L13.300,15.300 L0.7,15.300Z" fill="#fbfcfd" stroke="#9da7b5"/><path d="M9.300,0.7 L9.300,4.700 L13.300,4.700" fill="#e4e8ee" stroke="#9da7b5"/><circle cx="5.800" cy="8" r="2.500" fill="none" stroke="#5a93c8" stroke-width="1.500"/><circle cx="8.800" cy="11" r="2" fill="none" stroke="#7fa9d0" stroke-width="1.300"/></symbol>
<symbol id="homegrp" viewBox="0 0 17 16" preserveAspectRatio="none"><circle cx="9" cy="3.600" r="3" fill="#3fae49"/><circle cx="3.600" cy="9.500" r="3" fill="#2f7fd8"/><circle cx="12.500" cy="11.500" r="3.400" fill="#2a62c4"/><path d="M9,3.600 L3.600,9.500 L12.500,11.500Z" fill="none" stroke="#7aa6dc" stroke-width="1.2"/></symbol>
<symbol id="thispc16" viewBox="0 0 17 16" preserveAspectRatio="none"><rect x="0.500" y="4" width="4" height="9" fill="#c8cdd4"/><path d="M4.500,1 L16.500,2 L16,11 L4,10Z" fill="#dfe3e8"/><path d="M5.500,2 L15.600,2.900 L15.200,10 L5,9.200Z" fill="#2447c8"/><path d="M5.500,2 L10,2.400 L12,9.700 L5,9.200Z" fill="#1a2fae"/><ellipse cx="10" cy="13.500" rx="4.500" ry="1.800" fill="#d9dde2"/><rect x="8.500" y="10.500" width="3" height="3" fill="#c3c8cf"/></symbol>
<symbol id="recent" viewBox="0 0 17 16" preserveAspectRatio="none"><rect x="0.600" y="2.600" width="15" height="12" fill="#eef0f3" stroke="#a8afb9"/><rect x="2.500" y="4.500" width="6" height="4.500" fill="#b9c7d9"/><path d="M10,5h4M10,7.500h4M3,11h11M3,13h8" stroke="#b2b9c4" stroke-width="1"/><circle cx="12.500" cy="11.500" r="3.600" fill="#f4f5f7" stroke="#8d97a3"/><path d="M12.500,9.500 L12.500,11.700 L14,11.700" stroke="#5d6876" fill="none"/></symbol>
<symbol id="user" viewBox="0 0 16 16" preserveAspectRatio="none"><use href="#fold16"/><circle cx="9.500" cy="7" r="2.400" fill="#7a8fa8"/><path d="M5.500,14.500 Q5.500,10 9.500,10 Q13.500,10 13.500,14.500Z" fill="#5d7fb0"/></symbol>
<symbol id="f_desk" viewBox="0 0 16 16" preserveAspectRatio="none"><use href="#fold16"/><rect x="7" y="8" width="8.500" height="6.500" fill="#2a56c6" stroke="#5f7fc4" stroke-width="0.8"/></symbol>
<symbol id="f_doc" viewBox="0 0 16 16" preserveAspectRatio="none"><use href="#fold16"/><rect x="8" y="4.500" width="5.500" height="10" fill="#f5f7fa" stroke="#a4adba" stroke-width="0.8"/><path d="M9.200,7h3M9.200,9h3M9.200,11h3" stroke="#b8c1cf" stroke-width="0.8"/></symbol>
<symbol id="f_down" viewBox="0 0 16 16" preserveAspectRatio="none"><use href="#fold16"/><path d="M9,5.500 L13,5.500 L13,9.500 L15.500,9.500 L11,15 L6.500,9.500 L9,9.500Z" fill="#2f8fe0" stroke="#1d6fc0" stroke-width="0.6"/></symbol>
<symbol id="f_music" viewBox="0 0 16 16" preserveAspectRatio="none"><use href="#fold16"/><path d="M10.500,5 L10.500,11.500 M10.500,5 Q13,5.500 13.500,8" stroke="#2f8fd6" stroke-width="1.500" fill="none"/><ellipse cx="9.200" cy="12" rx="2.200" ry="1.700" fill="#2f8fd6"/></symbol>
<symbol id="f_pic" viewBox="0 0 16 16" preserveAspectRatio="none"><use href="#fold16"/><rect x="7" y="5.500" width="8" height="7" fill="#eaf3fb" stroke="#9aa6b6" stroke-width="0.8"/><path d="M7.500,12 L10,8.500 L12,10.500 L13,9.500 L14.500,12Z" fill="#5aa64a"/><rect x="7.500" y="6" width="7" height="3" fill="#8ec4ee"/></symbol>
<symbol id="f_vid" viewBox="0 0 16 16" preserveAspectRatio="none"><use href="#fold16"/><rect x="7.500" y="4.500" width="6.500" height="10.500" fill="#4a5568"/><rect x="9" y="6" width="3.500" height="3" fill="#8fb4e0"/><rect x="9" y="10.500" width="3.500" height="3" fill="#8fb4e0"/><path d="M8.200,5v10M13.300,5v10" stroke="#cfd5de" stroke-width="0.700" stroke-dasharray="1 1"/></symbol>
<symbol id="osdrive" viewBox="0 0 16 16" preserveAspectRatio="none"><g fill="#22a7f0"><rect x="1" y="1" width="5" height="5"/><rect x="7" y="1" width="5" height="5"/><rect x="1" y="7" width="5" height="5"/><rect x="7" y="7" width="5" height="5"/></g><rect x="2" y="12.500" width="13" height="3.500" fill="#b8c0cc"/></symbol>
<symbol id="bigfolder" viewBox="0 0 72 98" preserveAspectRatio="none"><defs><linearGradient id="bfg" x1="0" y1="0" x2="0" y2="1"><stop offset="0" stop-color="#f1d873"/><stop offset="0.45" stop-color="#f7e58f"/><stop offset="1" stop-color="#efcf5c"/></linearGradient>
<linearGradient id="bfp" x1="0" y1="0" x2="1" y2="0"><stop offset="0" stop-color="#e9e9e9"/><stop offset="0.25" stop-color="#fbfbfb"/><stop offset="1" stop-color="#f3f3f3"/></linearGradient>
<linearGradient id="bfi" x1="0" y1="0" x2="0" y2="1"><stop offset="0" stop-color="#efefef"/><stop offset="1" stop-color="#dcdcdc"/></linearGradient></defs>
<path d="M2.500,0.600 L59.200,10.200 L59.200,42 L19.600,42Z" fill="#f0da80"/><path d="M30,5.300 L59.200,10.200 L59.200,42 L30,42Z" fill="#f4e5a0" opacity="0.6"/>
<path d="M21.900,14.100 L46.800,23.400 L46.800,95.600 L21.900,84.700Z" fill="url(#bfp)" stroke="#dedede" stroke-width="0.800"/>
<path d="M27.400,40 Q27.400,34.500 32.500,35.500 L36,36.800 Q38.200,38 38.200,42 L38.200,82.500 L27.400,78.500Z" fill="url(#bfi)"/>
<path d="M46.800,20.300 L68.500,23.400 L68.500,91 L46.800,84.700Z" fill="url(#bfp)" stroke="#dedede" stroke-width="0.800"/>
<path d="M49.500,39 Q49.500,33.800 54,34.600 L56.500,35.200 Q58.400,36.300 58.400,40 L58.400,79.500 L49.500,77.500Z" fill="url(#bfi)"/>
<path d="M46.800,23.400 L46.800,95.600 L44.500,94.600 L44.500,22.600Z" fill="#d9d9d9" opacity="0.7"/>
<path d="M1.750,0.900 L19.600,15.600 L20.400,97.100 L1.750,77Z" fill="url(#bfg)"/><path d="M20.400,97.100 L19.600,15.600 L21.400,16.600 L21.800,95.800Z" fill="#d5b44c"/></symbol>
</defs></svg>
<div id="win"><div class="abs" style="left:-263px;top:-128px">
<div class="abs" style="left:270px;top:160px;width:1054px;height:528.5px;background:#fff;"></div>
<div class="abs" style="left:263px;top:128px;width:1069px;height:1.2px;background:#6a90b5;"></div>
<svg class="abs" style="left:272px;top:135px;" width="14.5" height="17"><use href="#fold16" width="14.5" height="17"/></svg>
<div class="abs" style="left:295px;top:137px;width:1px;height:14px;background:#8fb0d0;"></div>
<svg class="abs" style="left:305px;top:134.5px;opacity:.95" width="15" height="18"><use href="#doccheck" width="15" height="18"/></svg>
<svg class="abs" style="left:328px;top:135px;" width="14.5" height="17"><use href="#fold16" width="14.5" height="17"/></svg>
<svg class="abs" style="left:349.5px;top:139.5px;" width="9" height="9"><use href="#qadrop" width="9" height="9"/></svg>
<div class="abs" style="left:368.5px;top:137px;width:1px;height:14px;background:#8fb0d0;"></div>
<span class="t" style="left:762.0px;top:134.5px;font-size:15.5px;line-height:19px;color:#2b4763">Roaming</span>
<div class="abs" style="left:1233px;top:141px;width:9.3px;height:2.7px;background:#1c2733;"></div>
<div class="abs" style="left:1259.500px;top:135px;width:11px;height:9.500px;border:1.400px solid #1c2f44;border-top-width:3px"></div>
<div class="abs" style="left:1279px;top:129px;width:46px;height:21.5px;background:#c9504b;"></div>
<svg class="abs" style="left:1297.500px;top:135.500px" width="9" height="9" viewBox="0 0 9 9"><path d="M1,1 L8,8 M8,1 L1,8" stroke="#fff" stroke-width="2.200"/></svg>
<div class="abs" style="left:270px;top:160px;width:1054px;height:24px;background:#fff;"></div>
<div class="abs" style="left:270px;top:160px;width:58px;height:24px;background:#1979ca;"></div>
<span class="t" style="left:290.2px;top:165.8px;letter-spacing:-0.16px;color:#fff">File</span>
<div class="abs" style="left:328px;top:160.5px;width:59.5px;height:24.5px;background:#f5f6f7;border:1px solid #e2e3e5;border-bottom:none"></div>
<span class="t" style="left:343.0px;top:165.8px;letter-spacing:-0.45px;color:#3a3a3a">Home</span>
<span class="t" style="left:402.2px;top:165.8px;letter-spacing:-0.52px;color:#3a3a3a">Share</span>
<span class="t" style="left:462.2px;top:165.8px;letter-spacing:-0.17px;color:#3a3a3a">View</span>
<svg class="abs" style="left:1284px;top:167px" width="10" height="7" viewBox="0 0 10 7"><path d="M1,6 L5,1.500 L9,6" stroke="#9a9a9a" stroke-width="1.800" fill="none"/></svg>
<div class="abs" style="left:1305px;top:164.500px;width:14.500px;height:14.500px;border-radius:50%;background:#1d78cf"></div>
<span class="t" style="left:1309.3px;top:165.3px;color:#fff;font-weight:700">?</span>
<div class="abs" style="left:270px;top:184px;width:1054px;height:94.8px;background:#f5f6f7;border-top:1px solid #dadbdc;border-bottom:1px solid #dadbdc"></div>
<svg class="abs" style="left:284px;top:192px;" width="28.5" height="31.5"><use href="#copy32" width="28.5" height="31.5"/></svg>
<span class="t" style="left:284.0px;top:228.8px;letter-spacing:-0.33px;color:#3a3a3a">Copy</span>
<svg class="abs" style="left:329.5px;top:193px;opacity:.9" width="24.5" height="30"><use href="#paste32" width="24.5" height="30"/></svg>
<span class="t" style="left:327.8px;top:228.8px;letter-spacing:-0.60px;color:#a2a2a2">Paste</span>
<svg class="abs" style="left:368.5px;top:192.5px;" width="11" height="15.5"><use href="#cut" width="11" height="15.5"/></svg>
<span class="t" style="left:386.0px;top:193.8px;letter-spacing:-0.42px;color:#3a3a3a">Cut</span>
<svg class="abs" style="left:366px;top:217px;" width="16.5" height="12.5"><use href="#copypath" width="16.5" height="12.5"/></svg>
<span class="t" style="left:386.0px;top:216.6px;letter-spacing:-0.13px;color:#3a3a3a">Copy path</span>
<svg class="abs" style="left:368.3px;top:239px;opacity:.8" width="12.2" height="14"><use href="#pastesc" width="12.2" height="14"/></svg>
<span class="t" style="left:386.0px;top:238.9px;letter-spacing:-0.19px;color:#a2a2a2">Paste shortcut</span>
<span class="t" style="left:345.0px;top:262.6px;letter-spacing:0.03px;color:#8f8f8f">Clipboard</span>
<div class="abs" style="left:471px;top:188px;width:1px;height:86px;background:#e6e7e9;"></div>
<svg class="abs" style="left:486.5px;top:192px;" width="25" height="32.5"><use href="#fold32" width="25" height="32.5"/></svg>
<svg class="abs" style="left:497.5px;top:210px;" width="17.5" height="12.5"><use href="#bluearrow" width="17.5" height="12.5"/></svg>
<span class="t" style="left:482.6px;top:229.0px;letter-spacing:-0.29px;color:#3a3a3a">Move</span>
<span class="t" style="left:487.7px;top:242.0px;letter-spacing:-0.25px;color:#3a3a3a">to</span>
<svg class="abs" style="left:501px;top:247.5px" width="6" height="4" viewBox="0 0 6 4"><path d="M0,0.200 L6,0.200 L3,3.800Z" fill="#333"/></svg>
<svg class="abs" style="left:527px;top:192px;" width="25" height="32.5"><use href="#fold32" width="25" height="32.5"/></svg>
<svg class="abs" style="left:544px;top:192.5px;" width="13.5" height="16.5"><use href="#minidoc" width="13.5" height="16.5"/></svg>
<span class="t" style="left:527.0px;top:229.0px;letter-spacing:-0.45px;color:#3a3a3a">Copy</span>
<span class="t" style="left:531.0px;top:242.0px;letter-spacing:-0.25px;color:#3a3a3a">to</span>
<svg class="abs" style="left:544px;top:247.5px" width="6" height="4" viewBox="0 0 6 4"><path d="M0,0.200 L6,0.200 L3,3.800Z" fill="#333"/></svg>
<div class="abs" style="left:567.5px;top:193px;width:1px;height:60px;background:#e9eaec;"></div>
<svg class="abs" style="left:577px;top:194.5px;" width="30" height="27.5"><use href="#delx" width="30" height="27.5"/></svg>
<span class="t" style="left:575.2px;top:229.0px;letter-spacing:-0.28px;color:#3a3a3a">Delete</span>
<svg class="abs" style="left:588.3px;top:246.5px" width="6" height="4" viewBox="0 0 6 4"><path d="M0,0.200 L6,0.200 L3,3.800Z" fill="#333"/></svg>
<svg class="abs" style="left:621.8px;top:195.5px;" width="30.5" height="25"><use href="#rename" width="30.5" height="25"/></svg>
<span class="t" style="left:616.2px;top:229.0px;letter-spacing:-0.60px;color:#3a3a3a">Rename</span>
<span class="t" style="left:544.8px;top:262.6px;letter-spacing:-0.22px;color:#8f8f8f">Organize</span>
<div class="abs" style="left:667.5px;top:188px;width:1px;height:86px;background:#e6e7e9;"></div>
<svg class="abs" style="left:681.5px;top:192px;" width="25" height="32.5"><use href="#fold32" width="25" height="32.5"/></svg>
<span class="t" style="left:682.6px;top:229.0px;letter-spacing:-0.60px;color:#3a3a3a">New</span>
<span class="t" style="left:677.6px;top:242.0px;letter-spacing:0.23px;color:#3a3a3a">folder</span>
<svg class="abs" style="left:719px;top:192.5px;" width="15.5" height="15.7"><use href="#newitem" width="15.5" height="15.7"/></svg>
<span class="t" style="left:738.2px;top:193.8px;letter-spacing:-0.09px;color:#3a3a3a">New item</span>
<svg class="abs" style="left:791px;top:199.3px" width="6" height="4" viewBox="0 0 6 4"><path d="M0,0.200 L6,0.200 L3,3.800Z" fill="#333"/></svg>
<svg class="abs" style="left:719px;top:214.2px;" width="15.5" height="15.7"><use href="#easy" width="15.5" height="15.7"/></svg>
<span class="t" style="left:738.2px;top:216.6px;font-size:10.5px;letter-spacing:-0.05px;color:#3a3a3a">Easy access</span>
<svg class="abs" style="left:800.2px;top:222.1px" width="6" height="4" viewBox="0 0 6 4"><path d="M0,0.200 L6,0.200 L3,3.800Z" fill="#333"/></svg>
<span class="t" style="left:729.8px;top:262.6px;letter-spacing:-0.60px;color:#8f8f8f">New</span>
<div class="abs" style="left:816.5px;top:188px;width:1px;height:86px;background:#e6e7e9;"></div>
<svg class="abs" style="left:838.5px;top:194px;" width="28" height="29.5"><use href="#props" width="28" height="29.5"/></svg>
<span class="t" style="left:823.7px;top:228.8px;letter-spacing:-0.18px;color:#3a3a3a">Properties</span>
<svg class="abs" style="left:846.3px;top:246.5px" width="6" height="4" viewBox="0 0 6 4"><path d="M0,0.200 L6,0.200 L3,3.800Z" fill="#333"/></svg>
<svg class="abs" style="left:883px;top:194px;" width="17" height="14.5"><use href="#open" width="17" height="14.5"/></svg>
<span class="t" style="left:903.2px;top:193.8px;letter-spacing:-0.14px;color:#3a3a3a">Open</span>
<svg class="abs" style="left:936.8px;top:199.3px" width="6" height="4" viewBox="0 0 6 4"><path d="M0,0.200 L6,0.200 L3,3.800Z" fill="#333"/></svg>
<svg class="abs" style="left:884.7px;top:214.5px;opacity:.85" width="13.5" height="16.2"><use href="#edit" width="13.5" height="16.2"/></svg>
<span class="t" style="left:903.2px;top:216.6px;letter-spacing:-0.39px;color:#a2a2a2">Edit</span>
<svg class="abs" style="left:883px;top:237.3px;" width="16.6" height="16.2"><use href="#history" width="16.6" height="16.2"/></svg>
<span class="t" style="left:903.2px;top:239.1px;letter-spacing:-0.16px;color:#3a3a3a">History</span>
<span class="t" style="left:869.6px;top:262.8px;letter-spacing:-0.21px;color:#8f8f8f">Open</span>
<div class="abs" style="left:952.5px;top:188px;width:1px;height:86px;background:#e6e7e9;"></div>
<svg class="abs" style="left:961px;top:192.5px;" width="15.6" height="14.8"><use href="#selall" width="15.6" height="14.8"/></svg>
<span class="t" style="left:980.8px;top:193.8px;letter-spacing:-0.26px;color:#3a3a3a">Select all</span>
<svg class="abs" style="left:961px;top:215.5px;" width="15.6" height="14.5"><use href="#selnone" width="15.6" height="14.5"/></svg>
<span class="t" style="left:980.8px;top:216.6px;letter-spacing:-0.18px;color:#3a3a3a">Select none</span>
<svg class="abs" style="left:961px;top:237.7px;" width="15.6" height="15.7"><use href="#selinv" width="15.6" height="15.7"/></svg>
<span class="t" style="left:980.8px;top:239.1px;letter-spacing:-0.08px;color:#3a3a3a">Invert selection</span>
<span class="t" style="left:996.3px;top:262.8px;letter-spacing:-0.53px;color:#8f8f8f">Select</span>
<div class="abs" style="left:1071px;top:188px;width:1px;height:86px;background:#e6e7e9;"></div>
<svg class="abs" style="left:281.3px;top:288.500px" width="18" height="18" viewBox="0 0 18 18"><circle cx="9" cy="9" r="8.200" fill="none" stroke="#cfcfcf" stroke-width="1.400"/><path d="M9.500,5 L5.500,9 L9.500,13 M5.500,9 L13,9" stroke="#d2d2d2" stroke-width="1.600" fill="none"/></svg>
<svg class="abs" style="left:310.8px;top:288.500px" width="18" height="18" viewBox="0 0 18 18"><circle cx="9" cy="9" r="8.200" fill="none" stroke="#cfcfcf" stroke-width="1.400"/><path d="M8.500,5 L12.500,9 L8.500,13 M12.500,9 L5,9" stroke="#d2d2d2" stroke-width="1.600" fill="none"/></svg>
<svg class="abs" style="left:342px;top:296px" width="6" height="4" viewBox="0 0 6 4"><path d="M0,0.200 L6,0.200 L3,3.800Z" fill="#c4c4c4"/></svg>
<svg class="abs" style="left:362.500px;top:291px" width="11" height="13" viewBox="0 0 11 13"><path d="M5.500,12.500 L5.500,1.500 M1,6 L5.500,1.200 L10,6" stroke="#5a5a5a" stroke-width="1.700" fill="none"/></svg>
<div class="abs" style="left:381px;top:287px;width:710.500px;height:22.500px;border:1px solid #d9d9d9;background:#fff"></div>
<svg class="abs" style="left:385px;top:290px;" width="13.5" height="16"><use href="#fold16" width="13.5" height="16"/></svg>
<svg class="abs" style="left:409px;top:294.5px" width="4.500" height="7" viewBox="0 0 4.500 7"><path d="M0.300,0 L4.300,3.500 L0.300,7Z" fill="#555"/></svg>
<span class="t" style="left:422.7px;top:291.1px;letter-spacing:-0.49px;color:#2a2a2a">Evan</span>
<svg class="abs" style="left:458px;top:294.5px" width="4.500" height="7" viewBox="0 0 4.500 7"><path d="M0.300,0 L4.300,3.500 L0.300,7Z" fill="#555"/></svg>
<span class="t" style="left:471.8px;top:291.1px;letter-spacing:0.04px;color:#2a2a2a">AppData</span>
<svg class="abs" style="left:529px;top:294.5px" width="4.500" height="7" viewBox="0 0 4.500 7"><path d="M0.300,0 L4.300,3.500 L0.300,7Z" fill="#555"/></svg>
<span class="t" style="left:542.8px;top:291.1px;letter-spacing:0.08px;color:#2a2a2a">Roaming</span>
<svg class="abs" style="left:601.7px;top:294.5px" width="4.500" height="7" viewBox="0 0 4.500 7"><path d="M0.300,0 L4.300,3.500 L0.300,7Z" fill="#555"/></svg>
<svg class="abs" style="left:1051.500px;top:295px" width="9" height="6" viewBox="0 0 9 6"><path d="M1,1 L4.500,4.800 L8,1" stroke="#555" stroke-width="1.800" fill="none"/></svg>
<div class="abs" style="left:1065px;top:287.5px;width:1px;height:21.5px;background:#d9d9d9;"></div>
<svg class="abs" style="left:1072.500px;top:291.500px" width="12" height="13" viewBox="0 0 12 13"><path d="M9.800,4.200 A4.400,4.400 0 1 0 10.400,8.400" stroke="#6a6a6a" stroke-width="1.700" fill="none"/><path d="M7,0.500 L11,1 L10.500,5.200Z" fill="#6a6a6a"/></svg>
<div class="abs" style="left:1104px;top:287px;width:207.500px;height:22.500px;border:1px solid #d9d9d9;background:#fff"></div>
<span class="t" style="left:1113.6px;top:291.1px;letter-spacing:-0.15px;color:#7d7d7d">Search Roaming</span>
<svg class="abs" style="left:1290px;top:291.500px" width="12" height="12" viewBox="0 0 12 12"><circle cx="7.400" cy="4.600" r="3.300" fill="none" stroke="#5f5f5f" stroke-width="1.500"/><path d="M5,7 L1.200,10.800" stroke="#5f5f5f" stroke-width="2"/></svg>
<div class="abs" style="left:270px;top:318.5px;width:1054px;height:1.2px;background:#d8d8d8;"></div>
<div class="abs" style="left:270px;top:320px;width:146px;height:346px;overflow:hidden"><div class="abs" style="left:-270px;top:-320px">
<div class="abs" style="left:272px;top:481.3px;width:143px;height:21.6px;background:#f0f0f0;"></div>
<svg class="abs" style="left:291.7px;top:333.75px;" width="15" height="14.5"><use href="#star" width="15" height="14.5"/></svg>
<span class="t" style="left:313.0px;top:334.0px;letter-spacing:-0.21px;color:#2a2a2a">Favorites</span>
<svg class="abs" style="left:301.4px;top:357.25px;" width="16.5" height="11.5"><use href="#desk16" width="16.5" height="11.5"/></svg>
<span class="t" style="left:323.0px;top:356.0px;color:#2a2a2a">Desktop</span>
<svg class="abs" style="left:301.4px;top:376.4px;" width="15" height="16"><use href="#f_down" width="15" height="16"/></svg>
<span class="t" style="left:323.0px;top:377.4px;letter-spacing:0.17px;color:#2a2a2a">Downloads</span>
<svg class="abs" style="left:301.4px;top:399.3px;" width="16" height="14"><use href="#recent" width="16" height="14"/></svg>
<span class="t" style="left:323.0px;top:399.3px;letter-spacing:-0.14px;color:#2a2a2a">Recent places</span>
<svg class="abs" style="left:291.4px;top:443.05px;" width="16.5" height="11.5"><use href="#desk16" width="16.5" height="11.5"/></svg>
<span class="t" style="left:313.0px;top:441.8px;letter-spacing:-0.07px;color:#2a2a2a">Desktop</span>
<svg class="abs" style="left:301.4px;top:463px;" width="16.5" height="15"><use href="#homegrp" width="16.5" height="15"/></svg>
<span class="t" style="left:323.0px;top:463.5px;font-size:12.5px;letter-spacing:0.13px;color:#2a2a2a">Homegroup</span>
<svg class="abs" style="left:301.4px;top:484.2px;" width="15" height="16"><use href="#user" width="15" height="16"/></svg>
<span class="t" style="left:323.0px;top:485.2px;letter-spacing:-0.54px;color:#2a2a2a">Evan</span>
<svg class="abs" style="left:301.4px;top:506.4px;" width="17" height="15"><use href="#thispc16" width="17" height="15"/></svg>
<span class="t" style="left:323.0px;top:506.9px;letter-spacing:-0.35px;color:#2a2a2a">This PC</span>
<svg class="abs" style="left:312px;top:527.6px;" width="15" height="16"><use href="#f_desk" width="15" height="16"/></svg>
<span class="t" style="left:333.1px;top:528.6px;letter-spacing:-0.09px;color:#2a2a2a">Desktop</span>
<svg class="abs" style="left:312px;top:549.3px;" width="15" height="16"><use href="#f_doc" width="15" height="16"/></svg>
<span class="t" style="left:333.1px;top:550.3px;letter-spacing:0.19px;color:#2a2a2a">Documents</span>
<svg class="abs" style="left:312px;top:570.8px;" width="15" height="16"><use href="#f_down" width="15" height="16"/></svg>
<span class="t" style="left:333.1px;top:571.8px;letter-spacing:0.15px;color:#2a2a2a">Downloads</span>
<svg class="abs" style="left:312px;top:592.3px;" width="15" height="16"><use href="#f_music" width="15" height="16"/></svg>
<span class="t" style="left:333.1px;top:593.3px;letter-spacing:0.19px;color:#2a2a2a">Music</span>
<svg class="abs" style="left:312px;top:614px;" width="15" height="16"><use href="#f_pic" width="15" height="16"/></svg>
<span class="t" style="left:333.1px;top:615.0px;letter-spacing:-0.04px;color:#2a2a2a">Pictures</span>
<svg class="abs" style="left:312px;top:635.6px;" width="15" height="16"><use href="#f_vid" width="15" height="16"/></svg>
<span class="t" style="left:333.1px;top:636.6px;letter-spacing:-0.13px;color:#2a2a2a">Videos</span>
<svg class="abs" style="left:312px;top:658.3px;" width="12.5" height="13"><use href="#osdrive" width="12.5" height="13"/></svg>
<span class="t" style="left:333.1px;top:657.8px;letter-spacing:-0.38px;color:#2a2a2a">OS (C:)</span>
</div></div>
<div class="abs" style="left:416px;top:320px;width:15px;height:346px;background:#f0f0f0;"></div>
<div class="abs" style="left:416px;top:339px;width:14.5px;height:205.5px;background:#cdcdcd;"></div>
<svg class="abs" style="left:419.500px;top:327.500px" width="8" height="6" viewBox="0 0 8 6"><path d="M1,5 L4,1.500 L7,5" stroke="#555" stroke-width="1.700" fill="none"/></svg>
<svg class="abs" style="left:419.500px;top:653px" width="8" height="6" viewBox="0 0 8 6"><path d="M1,1 L4,4.500 L7,1" stroke="#555" stroke-width="1.700" fill="none"/></svg>
<span class="t" style="left:453.3px;top:326.8px;letter-spacing:0.05px;color:#6a7486">Name</span>
<svg class="abs" style="left:576.500px;top:322px" width="7" height="4" viewBox="0 0 7 4"><path d="M0.800,3.800 L3.500,0.800 L6.200,3.800" stroke="#7d8ea6" stroke-width="1.500" fill="none"/></svg>
<div class="abs" style="left:713.4px;top:321px;width:1px;height:23px;background:#f1f1f1;"></div>
<div class="abs" style="left:836.2px;top:321px;width:1px;height:23px;background:#f1f1f1;"></div>
<div class="abs" style="left:960.4px;top:321px;width:1px;height:23px;background:#f1f1f1;"></div>
<span class="t" style="left:721.0px;top:326.8px;letter-spacing:0.16px;color:#6a7486">Date modified</span>
<span class="t" style="left:844.5px;top:326.8px;letter-spacing:0.02px;color:#6a7486">Type</span>
<span class="t" style="left:967.4px;top:326.8px;letter-spacing:-0.60px;color:#6a7486">Size</span>
<div class="abs" style="left:449px;top:352.7px;width:590px;height:21.600px;background:#cde3f9;border:1px solid #86b6e6"></div>
<svg class="abs" style="left:454px;top:355px;" width="14.5" height="16.5"><use href="#fold16" width="14.5" height="16.5"/></svg>
<span class="t" style="left:474.0px;top:356.8px;letter-spacing:0.23px;color:#2a2a2a">.minecraft</span>
<span class="t" style="left:721.0px;top:356.8px;letter-spacing:-0.16px;color:#777777">1/27/2015 12:05 PM</span>
<span class="t" style="left:844.5px;top:356.8px;color:#777777">File folder</span>
<svg class="abs" style="left:454px;top:376.62px;" width="14.5" height="16.5"><use href="#fold16" width="14.5" height="16.5"/></svg>
<span class="t" style="left:474.0px;top:378.4px;letter-spacing:0.20px;color:#2a2a2a">Adobe</span>
<span class="t" style="left:721.0px;top:378.4px;letter-spacing:-0.08px;color:#777777">10/12/2014 7:21 AM</span>
<span class="t" style="left:844.5px;top:378.4px;color:#777777">File folder</span>
<svg class="abs" style="left:454px;top:398.24px;" width="14.5" height="16.5"><use href="#fold16" width="14.5" height="16.5"/></svg>
<span class="t" style="left:474.0px;top:400.0px;letter-spacing:-0.05px;color:#2a2a2a">AVAST Software</span>
<span class="t" style="left:721.0px;top:400.0px;letter-spacing:-0.16px;color:#777777">12/30/2014 1:51 PM</span>
<span class="t" style="left:844.5px;top:400.0px;color:#777777">File folder</span>
<svg class="abs" style="left:454px;top:419.86px;" width="14.5" height="16.5"><use href="#fold16" width="14.5" height="16.5"/></svg>
<span class="t" style="left:474.0px;top:421.7px;letter-spacing:0.10px;color:#2a2a2a">Identities</span>
<span class="t" style="left:721.0px;top:421.7px;letter-spacing:-0.11px;color:#777777">11/28/2014 3:52 PM</span>
<span class="t" style="left:844.5px;top:421.7px;color:#777777">File folder</span>
<svg class="abs" style="left:454px;top:441.48px;" width="14.5" height="16.5"><use href="#fold16" width="14.5" height="16.5"/></svg>
<span class="t" style="left:474.0px;top:443.3px;letter-spacing:-0.08px;color:#2a2a2a">java</span>
<span class="t" style="left:721.0px;top:443.3px;letter-spacing:-0.11px;color:#777777">11/28/2014 3:01 PM</span>
<span class="t" style="left:844.5px;top:443.3px;color:#777777">File folder</span>
<svg class="abs" style="left:454px;top:463.1px;" width="14.5" height="16.5"><use href="#fold16" width="14.5" height="16.5"/></svg>
<span class="t" style="left:474.0px;top:464.9px;letter-spacing:0.24px;color:#2a2a2a">Macromedia</span>
<span class="t" style="left:721.0px;top:464.9px;letter-spacing:-0.08px;color:#777777">10/12/2014 8:13 AM</span>
<span class="t" style="left:844.5px;top:464.9px;color:#777777">File folder</span>
<svg class="abs" style="left:454px;top:484.72px;" width="14.5" height="16.5"><use href="#fold16" width="14.5" height="16.5"/></svg>
<span class="t" style="left:474.0px;top:486.5px;font-size:12.5px;letter-spacing:0.11px;color:#2a2a2a">Microsoft</span>
<span class="t" style="left:721.0px;top:486.5px;letter-spacing:-0.08px;color:#777777">1/11/2015 2:31 PM</span>
<span class="t" style="left:844.5px;top:486.5px;color:#777777">File folder</span>
<svg class="abs" style="left:454px;top:506.34px;" width="14.5" height="16.5"><use href="#fold16" width="14.5" height="16.5"/></svg>
<span class="t" style="left:474.0px;top:508.1px;letter-spacing:-0.08px;color:#2a2a2a">WebStorage</span>
<span class="t" style="left:721.0px;top:508.1px;letter-spacing:-0.16px;color:#777777">12/17/2014 7:09 PM</span>
<span class="t" style="left:844.5px;top:508.1px;color:#777777">File folder</span>
<svg class="abs" style="left:455px;top:528.46px;" width="13.5" height="16"><use href="#sysfile" width="13.5" height="16"/></svg>
<span class="t" style="left:474.0px;top:529.8px;letter-spacing:-0.30px;color:#2a2a2a">sp_data.sys</span>
<span class="t" style="left:721.0px;top:529.8px;letter-spacing:-0.03px;color:#777777">1/27/2015 11:51 AM</span>
<span class="t" style="left:844.5px;top:529.8px;letter-spacing:-0.08px;color:#777777">System file</span>
<span class="t" style="left:1012.4px;top:529.8px;letter-spacing:-0.60px;color:#777777">1 KB</span>
<div class="abs" style="left:433px;top:648.5px;width:607px;height:16px;background:#f0f0f0;"></div>
<div class="abs" style="left:452px;top:648.5px;width:556px;height:16px;background:#cdcdcd;"></div>
<svg class="abs" style="left:439.500px;top:652.500px" width="6" height="8" viewBox="0 0 6 8"><path d="M5,1 L1.500,4 L5,7" stroke="#555" stroke-width="1.700" fill="none"/></svg>
<svg class="abs" style="left:1027.500px;top:652.500px" width="6" height="8" viewBox="0 0 6 8"><path d="M1,1 L4.500,4 L1,7" stroke="#555" stroke-width="1.700" fill="none"/></svg>
<div class="abs" style="left:1040.5px;top:320px;width:1px;height:346px;background:#f5f5f5;"></div>
<span class="t" style="left:1065.8px;top:330.8px;font-size:16px;line-height:20px;letter-spacing:0.04px;color:#2c3e5c">.minecraft</span>
<span class="t" style="left:1065.8px;top:356.0px;letter-spacing:0.06px;color:#3b4252">File folder</span>
<svg class="abs" style="left:1073px;top:380px;" width="70.5" height="97"><use href="#bigfolder" width="70.5" height="97"/></svg>
<span class="t" style="left:1065.8px;top:489.3px;letter-spacing:0.17px;color:#7c8290">Date modified:</span>
<span class="t" style="left:1157.9px;top:489.3px;letter-spacing:-0.18px;color:#3b4252">1/27/2015 12:05 PM</span>
<span class="t" style="left:1065.8px;top:507.7px;letter-spacing:0.15px;color:#7c8290">Availability:</span>
<span class="t" style="left:1157.9px;top:507.7px;letter-spacing:0.19px;color:#3b4252">Available offline</span>
<span class="t" style="left:284.7px;top:670.1px;letter-spacing:0.05px;color:#4d5a75">9 items</span>
<span class="t" style="left:346.3px;top:670.1px;letter-spacing:-0.05px;color:#4d5a75">1 item selected</span>
<div class="abs" style="left:1274.500px;top:664.500px;width:22.500px;height:24px;background:#cde8fb;border:1px solid #5fb2ea"></div>
<svg class="abs" style="left:1279px;top:670px" width="14" height="13" viewBox="0 0 14 13"><g stroke="#8a8f98" stroke-width="1"><path d="M4.500,1.500h9M4.500,4.500h7M4.500,7.500h9M4.500,10.500h7"/></g><g fill="#fff" stroke="#8a8f98" stroke-width="0.800"><rect x="0.500" y="0.500" width="2.600" height="2.600"/><rect x="0.500" y="5" width="2.600" height="2.600"/><rect x="0.500" y="9.500" width="2.600" height="2.600"/></g></svg>
<svg class="abs" style="left:1302px;top:670px" width="14" height="12" viewBox="0 0 14 12"><rect x="0.500" y="0.500" width="13" height="11" fill="#f4f6f8" stroke="#9aa3ae"/><rect x="2" y="2" width="10" height="8" fill="#4a86c8"/><path d="M2,10 L5.500,5.500 L8,8 L9.500,6.500 L12,10Z" fill="#2d4f2f"/><rect x="2" y="2" width="10" height="3.500" fill="#9cc6ea"/></svg>
</div></div>
</body>
</html>
